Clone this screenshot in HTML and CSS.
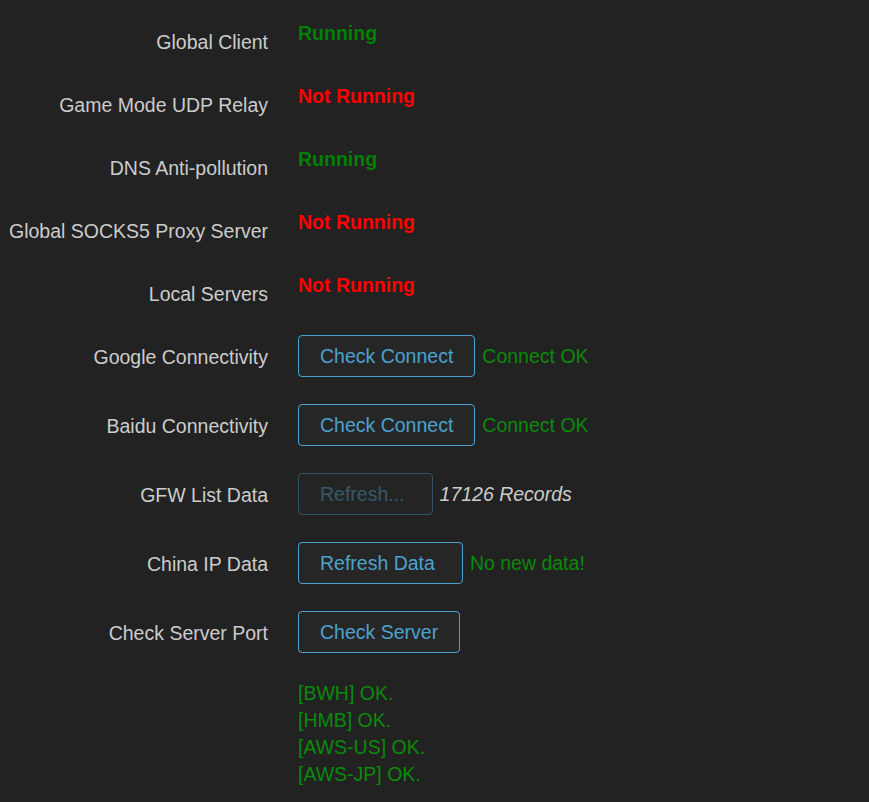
FILE: index.html
```html
<!DOCTYPE html>
<html lang="en">
<head>
    <meta charset="UTF-8">
    <meta name="viewport" content="width=device-width, initial-scale=1.0">
    <title>Status</title>
    <link rel="stylesheet" href="styles.css">
</head>
<body>
    <div class="status">

        <div class="row">
            <div class="label">Global Client</div>
            <div class="value state on">Running</div>
        </div>

        <div class="row">
            <div class="label">Game Mode UDP Relay</div>
            <div class="value state off">Not Running</div>
        </div>

        <div class="row">
            <div class="label">DNS Anti-pollution</div>
            <div class="value state on">Running</div>
        </div>

        <div class="row">
            <div class="label">Global SOCKS5 Proxy Server</div>
            <div class="value state off">Not Running</div>
        </div>

        <div class="row">
            <div class="label">Local Servers</div>
            <div class="value state off">Not Running</div>
        </div>

        <div class="row">
            <div class="label">Google Connectivity</div>
            <div class="value">
                <button class="btn">Check Connect</button>
                <span class="msg ok">Connect OK</span>
            </div>
        </div>

        <div class="row">
            <div class="label">Baidu Connectivity</div>
            <div class="value">
                <button class="btn">Check Connect</button>
                <span class="msg ok">Connect OK</span>
            </div>
        </div>

        <div class="row">
            <div class="label">GFW List Data</div>
            <div class="value">
                <button class="btn btn-refresh" disabled>Refresh...</button>
                <span class="msg note">17126 Records</span>
            </div>
        </div>

        <div class="row">
            <div class="label">China IP Data</div>
            <div class="value">
                <button class="btn btn-refresh">Refresh Data</button>
                <span class="msg ok">No new data!</span>
            </div>
        </div>

        <div class="row">
            <div class="label">Check Server Port</div>
            <div class="value">
                <button class="btn">Check Server</button>
            </div>
        </div>

        <div class="row">
            <div class="label"></div>
            <div class="value results">
                [BWH] OK.<br>
                [HMB] OK.<br>
                [AWS-US] OK.<br>
                [AWS-JP] OK.
            </div>
        </div>

    </div>
</body>
</html>
```

FILE: styles.css
```css
body {
    margin: 0;
    background-color: #222;
    color: #ccc;
    font-family: "Liberation Sans", Arial, sans-serif;
    font-size: 19.5px;
    line-height: 22px;
}

.status {
    padding-top: 20px;
}

.row {
    display: flex;
    gap: 30px;
    min-height: 36px;
    margin-bottom: 27px;
}

.label {
    width: 268px;
    flex-shrink: 0;
    text-align: right;
    padding-top: 11px;
}

.value {
    display: flex;
    align-items: center;
    gap: 7px;
    align-self: flex-start;
}

.state {
    padding-top: 2px;
    font-weight: bold;
}

.on {
    color: #008000;
}

.off {
    color: #ff0000;
}

.btn {
    font-family: inherit;
    font-size: 19.5px;
    line-height: 22px;
    height: 42px;
    padding: 9px 21px;
    color: #4aa3cf;
    background-color: #262626;
    border: 1px solid #4aa3cf;
    border-radius: 4px;
    cursor: pointer;
}

.btn-refresh {
    padding-right: 27px;
}

.btn:disabled {
    color: #36596a;
    border-color: #2f5565;
    background-color: #242424;
    cursor: default;
}

.msg.ok {
    color: #0a8a0a;
}

.msg.note {
    font-style: italic;
    color: #ccc;
}

.results {
    display: block;
    line-height: 27px;
    color: #0a8a0a;
}
```
